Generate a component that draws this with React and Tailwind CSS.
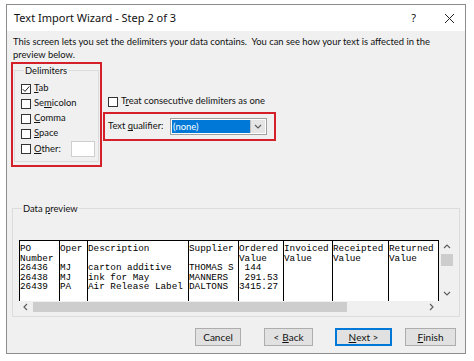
import React from 'react';

const cols = [
  { w: 'w-[40px]', lines: ['PO', 'Number', '26436', '26438', '26439'] },
  { w: 'w-[28px]', lines: ['Oper', '', 'MJ', 'MJ', 'PA'] },
  { w: 'w-[101px]', lines: ['Description', '', 'carton additive', 'ink for May', 'Air Release Label'] },
  { w: 'w-[50px]', lines: ['Supplier', '', 'THOMAS S', 'MANNERS', 'DALTONS'] },
  { w: 'w-[45px]', lines: ['Ordered', 'Value', ' 144', ' 291.53', '3415.27'] },
  { w: 'w-[49px]', lines: ['Invoiced', 'Value', '', '', ''] },
  { w: 'w-[56px]', lines: ['Receipted', 'Value', '', '', ''] },
  { w: 'w-[51px] border-r', lines: ['Returned', 'Value', '', '', ''] },
];

const Check = ({ checked }) => (
  <span className="w-[10px] h-[10px] border border-[#333] bg-white flex items-center justify-center shrink-0">
    {checked && (
      <svg width="8" height="8" viewBox="0 0 8 8">
        <path d="M0.8 4.2 L3 6.4 L7.3 1.4" fill="none" stroke="#222" strokeWidth="1" />
      </svg>
    )}
  </span>
);

const Opt = ({ checked, pre, u, post }) => (
  <div className="h-[15px] flex items-center gap-[3px] whitespace-nowrap">
    <Check checked={checked} />
    <span>
      {pre}
      <span className="underline underline-offset-1">{u}</span>
      {post}
    </span>
  </div>
);

const Chevron = ({ dir }) => {
  const d = {
    up: 'M1 5 L4 2 L7 5',
    down: 'M1 2 L4 5 L7 2',
    left: 'M5 1 L2 4 L5 7',
    right: 'M2 1 L5 4 L2 7',
  }[dir];
  return (
    <svg width="8" height="8" viewBox="0 0 8 8">
      <path d={d} fill="none" stroke="#606060" strokeWidth="1.2" />
    </svg>
  );
};

const Btn = ({ w, active, children }) => (
  <div
    className={`${w} h-[18px] flex items-center justify-center bg-[#e1e1e1] text-[10px] border ${
      active ? 'border-[#0078d7] border-2' : 'border-[#adadad]'
    }`}
  >
    {children}
  </div>
);

export default function App() {
  return (
    <div className="w-[474px] h-[361px] bg-white pt-[4px] pl-[6px] font-['Lato',sans-serif] text-[9.4px] text-[#111]">
      <div className="w-[460px] h-[350px] border border-[#8c8c8c] bg-[#f0f0f0] flex flex-col">
        <div className="h-[26px] bg-white flex items-center pl-[7px] font-['Noto_Sans',sans-serif] text-[11px]">
          <span className="flex-1">Text Import Wizard - Step 2 of 3</span>
          <span className="text-[11px] mr-[28px]">?</span>
          <svg width="11" height="11" viewBox="0 0 11 11" className="mr-[10px]">
            <path d="M1 1 L10 10 M10 1 L1 10" stroke="#222" strokeWidth="1" />
          </svg>
        </div>

        <p className="ml-[6px] mt-[4px] leading-[13px] w-[440px]">
          This screen lets you set the delimiters your data contains.&nbsp; You can see how your text is affected in the
          preview below.
        </p>

        <div className="ml-[4px] mt-[1px] flex">
          <div className="w-[91px] h-[105px] border-2 border-[#d3202a] px-[1px]">
            <fieldset className="h-[98px] border border-[#dcdcdc] pl-[6px]">
              <legend className="ml-[3px] px-[1px] leading-[13px]">Delimiters</legend>
              <div className="mt-[4px]">
                <Opt checked pre="" u="T" post="ab" />
                <Opt pre="Se" u="m" post="icolon" />
                <Opt pre="" u="C" post="omma" />
                <Opt pre="" u="S" post="pace" />
                <div className="flex items-center">
                  <Opt pre="" u="O" post="ther:" />
                  <span className="ml-[10px] w-[24px] h-[16px] bg-white border border-[#cfcfcf]" />
                </div>
              </div>
            </fieldset>
          </div>

          <div className="ml-[1px] pt-[32px]">
            <div className="ml-[5px]">
              <Opt pre="T" u="r" post="eat consecutive delimiters as one" />
            </div>
            <div className="mt-[3px] w-[173px] h-[29px] border-2 border-[#d3202a] flex items-center pl-[3px]">
              <span className="w-[62px] whitespace-nowrap">
                Text <span className="underline underline-offset-1">q</span>ualifier:
              </span>
              <div className="w-[97px] h-[17px] border border-[#a0a0a0] bg-white flex p-[1px]">
                <div className="flex-1 bg-[#0078d7] text-white leading-[13px] pl-[1px]">(none)</div>
                <div className="w-[15px] bg-[#e5e5e5] border-l border-[#c0c0c0] flex items-center justify-center">
                  <Chevron dir="down" />
                </div>
              </div>
            </div>
          </div>
        </div>

        <fieldset className="ml-[5px] mt-[35px] w-[448px] h-[115px] border border-[#dcdcdc] pl-[6px] pt-[25px]">
          <legend className="ml-[3px] px-[1px] leading-[13px]">
            Data <span className="underline underline-offset-1">p</span>review
          </legend>
          <div className="w-[436px] h-[73px] bg-white flex">
            <div className="w-[420px] flex flex-col">
              <div className="h-[61px] flex border-t border-black font-['Liberation_Mono',monospace] text-[9.3px] leading-[9.6px] text-black overflow-hidden">
                {cols.map((c, i) => (
                  <div key={i} className={`${c.w} border-l border-black pt-[3px] whitespace-pre`}>
                    {c.lines.map((l, j) => (
                      <div key={j} className="h-[9.6px]">{l}</div>
                    ))}
                  </div>
                ))}
              </div>
              <div className="h-[12px] bg-[#f0f0f0] flex items-center">
                <div className="w-[14px] flex justify-center"><Chevron dir="left" /></div>
                <div className="w-[314px] h-[10px] bg-[#cdcdcd]" />
                <div className="flex-1" />
                <div className="w-[14px] flex justify-center"><Chevron dir="right" /></div>
              </div>
            </div>
            <div className="w-[16px] flex flex-col">
              <div className="h-[61px] bg-[#f0f0f0] flex flex-col items-center">
                <div className="h-[14px] flex items-center"><Chevron dir="up" /></div>
                <div className="w-[12px] h-[12px] bg-[#cdcdcd]" />
                <div className="flex-1" />
                <div className="h-[14px] flex items-center"><Chevron dir="down" /></div>
              </div>
              <div className="h-[12px] bg-[#f0f0f0]" />
            </div>
          </div>
        </fieldset>

        <div className="mt-[11px] flex justify-end gap-[22px] mr-[9px]">
          <div className="flex gap-[23px]">
            <Btn w="w-[46px]">Cancel</Btn>
            <Btn w="w-[49px]">
              &lt; <span className="underline underline-offset-1 ml-[3px]">B</span>ack
            </Btn>
          </div>
          <div className="flex gap-[13px]">
            <Btn w="w-[57px]" active>
              <span className="underline underline-offset-1">N</span>ext &gt;
            </Btn>
            <Btn w="w-[51px]">
              <span className="underline underline-offset-1">F</span>inish
            </Btn>
          </div>
        </div>
      </div>
    </div>
  );
}
